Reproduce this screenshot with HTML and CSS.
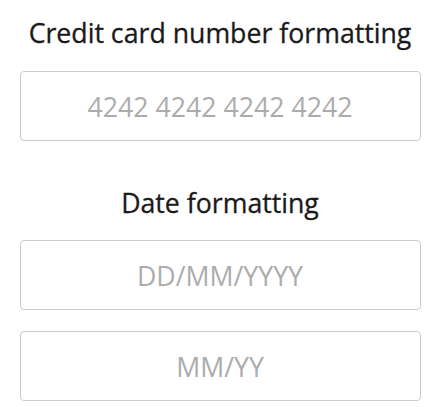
FILE: index.html
```html
<!DOCTYPE html>
<html>
<head>
<meta charset="utf-8">
<link rel="stylesheet" href="styles.css">
</head>
<body>
<div class="page">
  <h2 class="title">Credit card number formatting</h2>
  <input class="field" type="text" placeholder="4242 4242 4242 4242">
  <h2 class="title title-date">Date formatting</h2>
  <input class="field" type="text" placeholder="DD/MM/YYYY">
  <input class="field field-gap" type="text" placeholder="MM/YY">
</div>
</body>
</html>
```
FILE: styles.css
```css
html, body {
  margin: 0;
  padding: 0;
  background: #ffffff;
}
.page {
  display: flex;
  flex-direction: column;
  align-items: center;
  padding: 13px 20px 0;
  font-family: "Open Sans", sans-serif;
}
.title {
  margin: 0 0 18px;
  font-size: 26.7px;
  font-weight: 400;
  line-height: 40px;
  color: #1a1a1a;
  -webkit-text-stroke: 0.3px #1a1a1a;
  text-align: center;
}
.title-date {
  margin-top: 42px;
  margin-bottom: 17px;
}
.field {
  box-sizing: border-box;
  width: 401px;
  height: 70px;
  border: 1px solid #cccccc;
  border-radius: 4px;
  font-family: "Open Sans", sans-serif;
  font-size: 26.7px;
  text-align: center;
  color: #333;
  outline: none;
}
.field::placeholder {
  color: #acacac;
}
.field-gap {
  margin-top: 21px;
}
```
